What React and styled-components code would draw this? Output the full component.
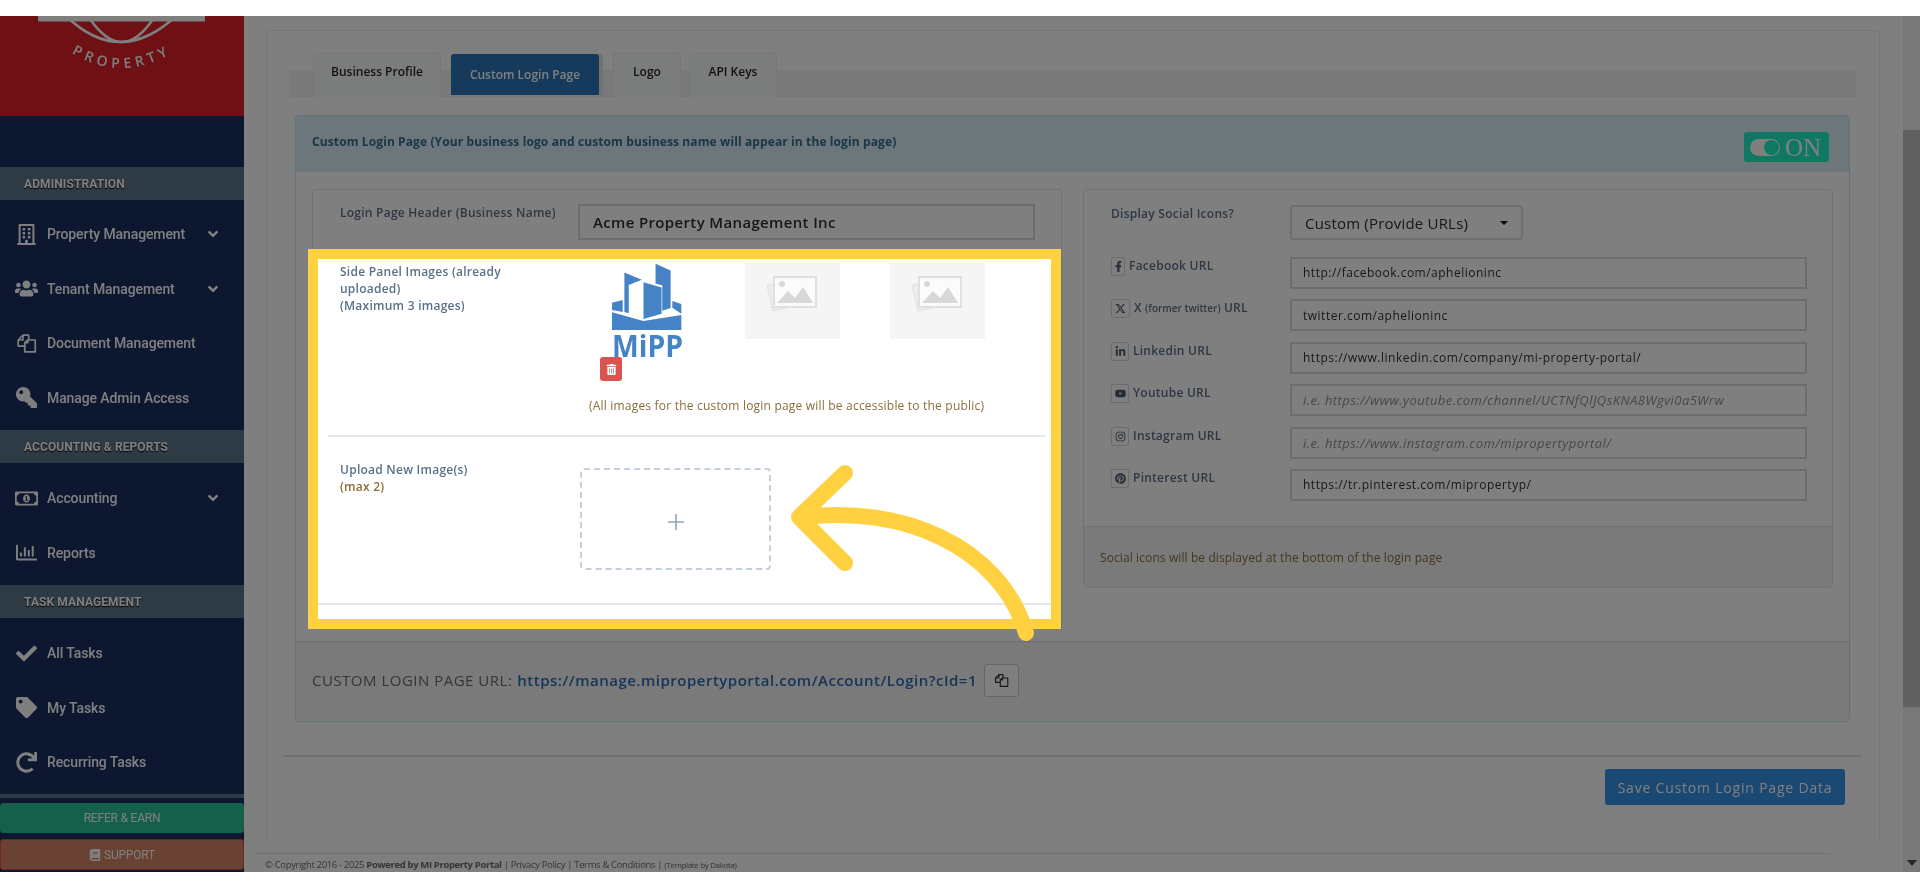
import React from 'react';
import styled, { createGlobalStyle } from 'styled-components';
import { FaRegBuilding, FaUsers, FaKey, FaRegMoneyBillAlt, FaRegChartBar, FaCheck, FaTag, FaRedo, FaBook, FaAngleDown, FaTrashAlt, FaFacebookF, FaLinkedinIn, FaYoutube, FaInstagram, FaPinterest } from 'react-icons/fa';
import { FaXTwitter } from 'react-icons/fa6';

const Global = createGlobalStyle`
  html, body { margin: 0; height: 100%; background: #fff; overflow: hidden; }
  #root { height: 100%; }
  * { box-sizing: border-box; }
`;

const Page = styled.div`
  padding-top: 16px;
  height: 889px;
  background: #fff;
  font-family: "Open Sans", "Liberation Sans", sans-serif;
`;

const Frame = styled.div`
  position: relative;
  display: flex;
  height: 856px;
  overflow: hidden;
  background: #fff;
  filter: blur(0.55px);
`;

const Sidebar = styled.aside`
  width: 244px;
  flex: none;
  display: flex;
  flex-direction: column;
  background: #1c2e60;
  font-family: Roboto, "Liberation Sans", sans-serif;
`;

const LogoBlock = styled.div`
  height: 100px;
  flex: none;
  margin-bottom: 51px;
  background: #dc2028;
  svg { display: block; }
`;

const SectionHead = styled.div`
  height: 33px;
  flex: none;
  display: flex;
  align-items: center;
  padding-left: 24px;
  background: #5c7488;
  color: #fff;
  font-size: 12px;
  font-weight: 700;
  letter-spacing: 0.1px;
  text-shadow: 0 1px 1px #000;
`;

const NavGroup = styled.div`
  padding: ${p => p.$top}px 0 ${p => p.$bottom}px;
`;

const NavItem = styled.div`
  height: 54.5px;
  display: flex;
  align-items: center;
  padding: 0 23px 0 15px;
  color: #fff;
  font-size: 14px;
  font-weight: 500;
  letter-spacing: -0.1px;
  svg.lead { width: 23px; height: 21px; margin-right: 9px; flex: none; }
  span { flex: 1; }
  svg.caret { width: 16px; height: 16px; }
`;

const FlippedKey = styled(FaKey)`
  transform: scaleX(-1);
`;

const SideRule = styled.div`
  height: 4px;
  margin-top: 4.5px;
  flex: none;
  background: #5c7488;
`;

const SideButton = styled.div`
  height: ${p => p.$h}px;
  margin-top: ${p => p.$mt}px;
  flex: none;
  display: flex;
  align-items: center;
  justify-content: center;
  gap: 3px;
  border-radius: 3px;
  border: 1px solid ${p => p.$line};
  background: ${p => p.$bg};
  color: #fff;
  font-size: 12px;
  letter-spacing: -0.2px;
`;

const Main = styled.main`
  flex: 1;
  min-width: 0;
  display: flex;
  flex-direction: column;
`;

const OuterPanel = styled.div`
  height: 811px;
  flex: none;
  margin: 14px 23px 0 22px;
  padding: 22px 23px 0 22px;
  border: 1px solid #e7eaec;
  border-bottom: 0;
  border-radius: 4px 4px 0 0;
`;

const TabStrip = styled.div`
  display: flex;
  height: 44px;
  padding-left: 24px;
  background: linear-gradient(#fff 17px, #f2f3f4 17px);
`;

const Tab = styled.div`
  width: ${p => p.$w}px;
  margin-right: ${p => p.$gap}px;
  height: ${p => (p.$active ? 41 : 44)}px;
  margin-top: ${p => (p.$active ? 1 : 0)}px;
  padding-top: ${p => (p.$active ? 12 : 9)}px;
  text-align: center;
  font-size: 12px;
  font-weight: 600;
  color: ${p => (p.$active ? '#fff' : '#1f2226')};
  background: ${p => (p.$active ? '#2d74b8' : '#f7f8f8')};
  border: ${p => (p.$active ? '0' : '1px solid #eceeef')};
  border-bottom: 0;
  border-radius: 3px 3px 0 0;
  box-shadow: ${p => (p.$active ? '4px 0 0 #e0e2e4' : 'none')};
`;

const Panel = styled.section`
  margin: 18px 6px 0;
  height: 607px;
  display: flex;
  flex-direction: column;
  border: 1px solid #bce8f1;
  border-radius: 4px;
`;

const PanelHead = styled.header`
  height: 56px;
  flex: none;
  display: flex;
  align-items: center;
  justify-content: space-between;
  padding: 0 20px 0 16px;
  background: #d9edf7;
  color: #31708f;
  font-size: 12px;
  font-weight: 700;
  letter-spacing: 0.11px;
  span { margin-bottom: 6px; }
`;

const Toggle = styled.div`
  width: 85px;
  height: 30px;
  margin-top: 6px;
  display: flex;
  align-items: center;
  gap: 5px;
  padding-left: 6px;
  border-radius: 3px;
  background: #20f0c4;
  color: #fff;
  font-family: "Liberation Serif", serif;
  font-size: 25px;
  font-weight: 400;
  letter-spacing: 0;
  line-height: 1;
`;

const Knob = styled.i`
  display: block;
  position: relative;
  width: 30px;
  height: 17px;
  border-radius: 9px;
  background: #fff;
  &::after {
    content: '';
    position: absolute;
    right: 1px;
    top: 1px;
    width: 15px;
    height: 15px;
    border-radius: 50%;
    background: #20f0c4;
  }
`;

const PanelBody = styled.div`
  flex: 1;
  display: flex;
  align-items: flex-start;
  gap: 21px;
  padding: 17px 16px 0;
  min-height: 0;
`;

const LeftBox = styled.div`
  width: 750px;
  height: 441px;
  flex: none;
  padding-top: 14px;
  border: 1px solid #e2e5e7;
  border-bottom: 0;
  border-radius: 4px 4px 0 0;
`;

const FormRow = styled.div`
  display: flex;
  padding-left: 27px;
  margin-top: ${p => p.$mt || 0}px;
`;

const FieldLabel = styled.div`
  width: 238px;
  flex: none;
  font-size: 12px;
  line-height: 17px;
  font-weight: 600;
  letter-spacing: 0.25px;
  color: #5a7088;
`;

const Warn = styled.span`
  display: block;
  color: #8a6d3b;
`;

const HeaderInput = styled.div`
  width: 457px;
  height: 36px;
  display: flex;
  align-items: center;
  padding-left: 13px;
  border: 2px solid #d5d8da;
  color: #2b2f33;
  font-size: 15px;
  font-weight: 600;
  letter-spacing: 0.35px;
`;

const Thumbs = styled.div`
  display: flex;
  margin-left: 22px;
`;

const ThumbCell = styled.div`
  width: 145px;
`;

const LogoFrame = styled.div`
  width: 95px;
  height: 94px;
  display: flex;
  justify-content: center;
  svg { display: block; overflow: visible; }
`;

const DeleteBtn = styled.div`
  width: 22px;
  height: 24px;
  display: flex;
  align-items: center;
  justify-content: center;
  border-radius: 3px;
  background: #d9534f;
  color: #fff;
  font-size: 11px;
`;

const Placeholder = styled.div`
  width: 95px;
  height: 76px;
  display: flex;
  align-items: center;
  justify-content: center;
  padding-bottom: 16px;
  background: #f5f5f5;
`;

const Note = styled.div`
  margin: 16px 0 0 276px;
  font-size: 12px;
  line-height: 17px;
  color: #8a6d3b;
  font-weight: 500;
  letter-spacing: 0.2px;
`;

const Divider = styled.div`
  height: 2px;
  margin: 21px 16px 24px 15px;
  background: #e7e8ea;
`;

const Dropzone = styled.div`
  width: 191px;
  height: 102px;
  margin: 7px 0 0 2px;
  padding-top: 5px;
  display: flex;
  align-items: center;
  justify-content: center;
  border: 2px dashed #c5cfdc;
  border-radius: 4px;
`;

const FootLine = styled.div`
  height: 2px;
  margin-top: 33px;
  background: #e7e8ea;
`;

const RightBox = styled.div`
  width: 750px;
  height: 399px;
  flex: none;
  display: flex;
  flex-direction: column;
  border: 1px solid #e2e5e7;
  border-radius: 4px;
`;

const SocialForm = styled.div`
  flex: 1;
  display: grid;
  grid-template-columns: 179px 517px;
  grid-template-rows: 41.6px;
  grid-auto-rows: 32px;
  row-gap: 10.4px;
  padding: 15px 0 0 27px;
  align-content: start;
`;

const SocialLabel = styled.div`
  display: flex;
  align-items: flex-start;
  gap: 4px;
  font-size: 12px;
  font-weight: 600;
  line-height: 17px;
  letter-spacing: 0.25px;
  color: #5a7088;
  small { font-size: 10px; letter-spacing: 0; }
`;

const IconChip = styled.span`
  display: inline-flex;
  align-items: center;
  justify-content: center;
  width: ${p => p.$w || 14}px;
  height: 19px;
  flex: none;
  border: 1px solid #d5d8da;
  color: #4a5a70;
  font-size: 11px;
  border-radius: 2px;
`;

const SelectBox = styled.div`
  width: 233px;
  height: 35px;
  display: flex;
  align-items: center;
  justify-content: space-between;
  padding: 0 13px;
  border: 2px solid #dddfe1;
  border-radius: 3px;
  color: #2b2f33;
  font-size: 15px;
  letter-spacing: 0.2px;
  i { width: 0; height: 0; border: 4px solid transparent; border-top-color: #111; border-bottom: 0; }
`;

const TextField = styled.div`
  height: 32px;
  display: flex;
  align-items: center;
  padding-left: 11px;
  border: 2px solid #d9dbdd;
  font-size: ${p => (p.$ph ? 13 : 12)}px;
  letter-spacing: ${p => (p.$ph ? 0.45 : 0.5)}px;
  color: ${p => (p.$ph ? '#8c8f92' : '#303336')};
  font-style: ${p => (p.$ph ? 'italic' : 'normal')};
`;

const SocialFoot = styled.div`
  height: 61px;
  flex: none;
  display: flex;
  align-items: center;
  padding: 0 0 0 16px;
  background: #f5f5f5;
  border-top: 1px solid #e7e7e7;
  color: #8a6d3b;
  font-size: 12px;
  font-weight: 500;
  letter-spacing: 0.1px;
`;

const PanelFoot = styled.footer`
  height: 80px;
  flex: none;
  display: flex;
  align-items: center;
  padding: 0 0 3px 16px;
  background: #f5f5f5;
  border-top: 1px solid #ddd;
  font-size: 15px;
  color: #676a6c;
  letter-spacing: 0.5px;
  a { margin-left: 5px; color: #2a6ab5; font-weight: 600; text-decoration: none; }
`;

const CopyBtn = styled.div`
  width: 35px;
  height: 33px;
  margin-left: 7px;
  display: flex;
  align-items: center;
  justify-content: center;
  background: #fff;
  border: 1px solid #ccc;
  border-radius: 3px;
  color: #333;
`;

const Rule = styled.div`
  height: 2px;
  margin: 33px -5px 0;
  background: #dfe1e3;
`;

const SaveRow = styled.div`
  display: flex;
  justify-content: flex-end;
  padding: 12px 11px 0 0;
`;

const SaveBtn = styled.div`
  width: 240px;
  height: 36px;
  display: flex;
  align-items: center;
  justify-content: center;
  border-radius: 3px;
  background: #3492e8;
  color: #fff;
  font-size: 14px;
  font-weight: 500;
  letter-spacing: 0.8px;
`;

const PageFoot = styled.div`
  height: 19px;
  margin: 12px 73px 0 10px;
  padding: 3px 0 0 11px;
  border-top: 1px solid #dfe1e3;
  white-space: nowrap;
  font-size: 9.5px;
  line-height: 15px;
  color: #676a6c;
  letter-spacing: -0.35px;
  small { font-size: 8px; }
`;

const Scrollbar = styled.div`
  width: 17px;
  flex: none;
  display: flex;
  flex-direction: column;
  align-items: center;
  background: #f1f1f1;
`;

const Thumb = styled.div`
  width: 100%;
  height: 577px;
  margin-top: 114px;
  background: #c1c1c1;
`;

const ArrowDown = styled.i`
  margin-top: auto;
  margin-bottom: 6px;
  width: 0;
  height: 0;
  border: 5px solid transparent;
  border-top: 6px solid #505050;
  border-bottom: 0;
`;

const Spotlight = styled.div`
  position: absolute;
  left: 308px;
  top: 232.5px;
  width: 753px;
  height: 380px;
  border: 10px solid #ffd040;
  box-shadow: 0 0 0 2400px rgba(0, 0, 0, 0.5);
  pointer-events: none;
`;

const ArrowArt = styled.svg`
  position: absolute;
  left: 0;
  top: 0;
  pointer-events: none;
`;

const DocsIcon = ({ size = 22, className }) => (
  <svg className={className} width={size} height={size} viewBox="0 0 24 24" fill="none" stroke="currentColor" strokeWidth="1.9" strokeLinejoin="round">
    <path d="M11 15H2.5V8L8 2.5h6.5V8" />
    <path d="M2.5 8H8V2.5" />
    <path d="M10 21.5V11l3.5-3H22v13.5z" />
    <path d="M10 11h3.5V8" />
  </svg>
);

const MippLogo = () => (
  <svg width="71" height="94" viewBox="128 40 212 280" fill="#4583c6">
    <path d="M258 42l45 20v112l-25 8V107l-20-6z" />
    <path d="M222 97l54 16v78l-54 16z" />
    <path d="M165 68l52 22-39 15v85l-13-4z" />
    <path d="M128 158l32-8v36l-32-6z" />
    <path d="M308 153l27 9v29l-27-18z" />
    <path d="M128 187l94 26 113-18v45H128z" />
    <text x="128" y="319" textLength="212" lengthAdjust="spacingAndGlyphs" fontFamily="'Open Sans', sans-serif" fontWeight="700" fontSize="92">MiPP</text>
  </svg>
);

const PhotoPlaceholder = () => (
  <svg width="56" height="44" viewBox="0 0 56 44">
    <path d="M2 14l36-8 6 26-36 8z" fill="#ececec" stroke="#e2e2e2" />
    <path d="M9 8l36-3 1 5-37 4z" fill="#e6e6e6" />
    <rect x="9" y="6" width="42" height="30" fill="#fbfbfb" stroke="#e0e0e0" strokeWidth="2" />
    <path d="M12 32l11-12 7 7 8-11 10 16z" fill="#d8d8d8" />
    <circle cx="17" cy="13" r="3" fill="#d8d8d8" />
  </svg>
);

const BrandArt = () => (
  <svg width="244" height="100" viewBox="0 0 244 100">
    <g fill="none" stroke="#fff" strokeWidth="2.6">
      <path d="M66 0Q120 52 176 0" />
      <path d="M88 0Q122 52 155 0" />
    </g>
    <rect x="38" width="167" height="5.5" fill="#fff" />
    <path id="brandCurve" d="M64 32Q120 72 180 32" fill="none" />
    <text fill="#fff" fontFamily="'Open Sans', sans-serif" fontWeight="600" fontSize="14" letterSpacing="4.5" textAnchor="middle">
      <textPath href="#brandCurve" startOffset="50%">PROPERTY</textPath>
    </text>
  </svg>
);

const navAdmin = [
  ['Property Management', <FaRegBuilding className="lead" />, true],
  ['Tenant Management', <FaUsers className="lead" />, true],
  ['Document Management', <DocsIcon className="lead" />, false],
  ['Manage Admin Access', <FlippedKey className="lead" />, false],
];
const navAccount = [
  ['Accounting', <FaRegMoneyBillAlt className="lead" />, true],
  ['Reports', <FaRegChartBar className="lead" />, false],
];
const navTasks = [
  ['All Tasks', <FaCheck className="lead" />, false],
  ['My Tasks', <FaTag className="lead" />, false],
  ['Recurring Tasks', <FaRedo className="lead" />, false],
];

const Nav = ({ items, top, bottom }) => (
  <NavGroup $top={top} $bottom={bottom}>
    {items.map(([label, icon, caret]) => (
      <NavItem key={label}>
        {icon}
        <span>{label}</span>
        {caret && <FaAngleDown className="caret" />}
      </NavItem>
    ))}
  </NavGroup>
);

const socials = [
  [<IconChip><FaFacebookF /></IconChip>, 'Facebook URL', 'http://facebook.com/aphelioninc', false],
  [<IconChip $w={19}><FaXTwitter /></IconChip>, <span>X <small>(former twitter)</small> URL</span>, 'twitter.com/aphelioninc', false],
  [<IconChip $w={18}><FaLinkedinIn /></IconChip>, 'Linkedin URL', 'https://www.linkedin.com/company/mi-property-portal/', false],
  [<IconChip $w={18}><FaYoutube /></IconChip>, 'Youtube URL', 'i.e. https://www.youtube.com/channel/UCTNfQlJQsKNA8Wgvi0a5Wrw', true],
  [<IconChip $w={18}><FaInstagram /></IconChip>, 'Instagram URL', 'i.e. https://www.instagram.com/mipropertyportal/', true],
  [<IconChip $w={18}><FaPinterest /></IconChip>, 'Pinterest URL', 'https://tr.pinterest.com/mipropertyp/', false],
];

export default function App() {
  return (
    <Page>
      <Global />
      <Frame>
        <Sidebar>
          <LogoBlock><BrandArt /></LogoBlock>
          <SectionHead>ADMINISTRATION</SectionHead>
          <Nav items={navAdmin} top={7} bottom={5} />
          <SectionHead>ACCOUNTING &amp; REPORTS</SectionHead>
          <Nav items={navAccount} top={8} bottom={5} />
          <SectionHead>TASK MANAGEMENT</SectionHead>
          <Nav items={navTasks} top={8} bottom={0} />
          <SideRule />
          <SideButton $h={30} $mt={5} $bg="#28c096" $line="#28c096">REFER &amp; EARN</SideButton>
          <SideButton $h={31} $mt={6} $bg="#d48466" $line="#e04a4a"><FaBook />SUPPORT</SideButton>
        </Sidebar>
        <Main>
          <OuterPanel>
            <TabStrip>
              <Tab $w={128} $gap={10}>Business Profile</Tab>
              <Tab $w={148} $gap={14} $active>Custom Login Page</Tab>
              <Tab $w={68} $gap={8}>Logo</Tab>
              <Tab $w={88} $gap={0}>API Keys</Tab>
            </TabStrip>
            <Panel>
              <PanelHead>
                <span>Custom Login Page (Your business logo and custom business name will appear in the login page)</span>
                <Toggle><Knob />ON</Toggle>
              </PanelHead>
              <PanelBody>
                <LeftBox>
                  <FormRow>
                    <FieldLabel>Login Page Header (Business Name)</FieldLabel>
                    <HeaderInput>Acme Property Management Inc</HeaderInput>
                  </FormRow>
                  <FormRow $mt={23}>
                    <FieldLabel>Side Panel Images (already<br />uploaded)<br />(Maximum 3 images)</FieldLabel>
                    <Thumbs>
                      <ThumbCell>
                        <LogoFrame><MippLogo /></LogoFrame>
                        <DeleteBtn><FaTrashAlt /></DeleteBtn>
                      </ThumbCell>
                      <ThumbCell><Placeholder><PhotoPlaceholder /></Placeholder></ThumbCell>
                      <ThumbCell><Placeholder><PhotoPlaceholder /></Placeholder></ThumbCell>
                    </Thumbs>
                  </FormRow>
                  <Note>(All images for the custom login page will be accessible to the public)</Note>
                  <Divider />
                  <FormRow>
                    <FieldLabel>Upload New Image(s)<Warn>(max 2)</Warn></FieldLabel>
                    <Dropzone>
                      <svg width="18" height="18" viewBox="0 0 18 18" stroke="#93a3b8" strokeWidth="1.6">
                        <path d="M9 1v16M1 9h16" />
                      </svg>
                    </Dropzone>
                  </FormRow>
                  <FootLine />
                </LeftBox>
                <RightBox>
                  <SocialForm>
                    <SocialLabel>Display Social Icons?</SocialLabel>
                    <SelectBox>Custom (Provide URLs)<i /></SelectBox>
                    {socials.map(([icon, label, value, ph], i) => (
                      <React.Fragment key={i}>
                        <SocialLabel>{icon}{label}</SocialLabel>
                        <TextField $ph={ph}>{value}</TextField>
                      </React.Fragment>
                    ))}
                  </SocialForm>
                  <SocialFoot>Social icons will be displayed at the bottom of the login page</SocialFoot>
                </RightBox>
              </PanelBody>
              <PanelFoot>
                CUSTOM LOGIN PAGE URL:
                <a>https://manage.mipropertyportal.com/Account/Login?cId=1</a>
                <CopyBtn><DocsIcon size={15} /></CopyBtn>
              </PanelFoot>
            </Panel>
            <Rule />
            <SaveRow><SaveBtn>Save Custom Login Page Data</SaveBtn></SaveRow>
          </OuterPanel>
          <PageFoot>© Copyright 2016 - 2025 <b>Powered by MI Property Portal</b> | Privacy Policy | Terms &amp; Conditions | <small>(Template by Dakota)</small></PageFoot>
        </Main>
        <Scrollbar>
          <Thumb />
          <ArrowDown />
        </Scrollbar>
        <Spotlight />
        <ArrowArt width="1920" height="856" viewBox="0 16 1920 856" fill="none" stroke="#ffd040" strokeWidth="16" strokeLinecap="round" strokeLinejoin="round">
          <path d="M804 517C900 505 1000 545 1026 633" />
          <path d="M845 473L799 517L845 563" />
        </ArrowArt>
      </Frame>
    </Page>
  );
}
